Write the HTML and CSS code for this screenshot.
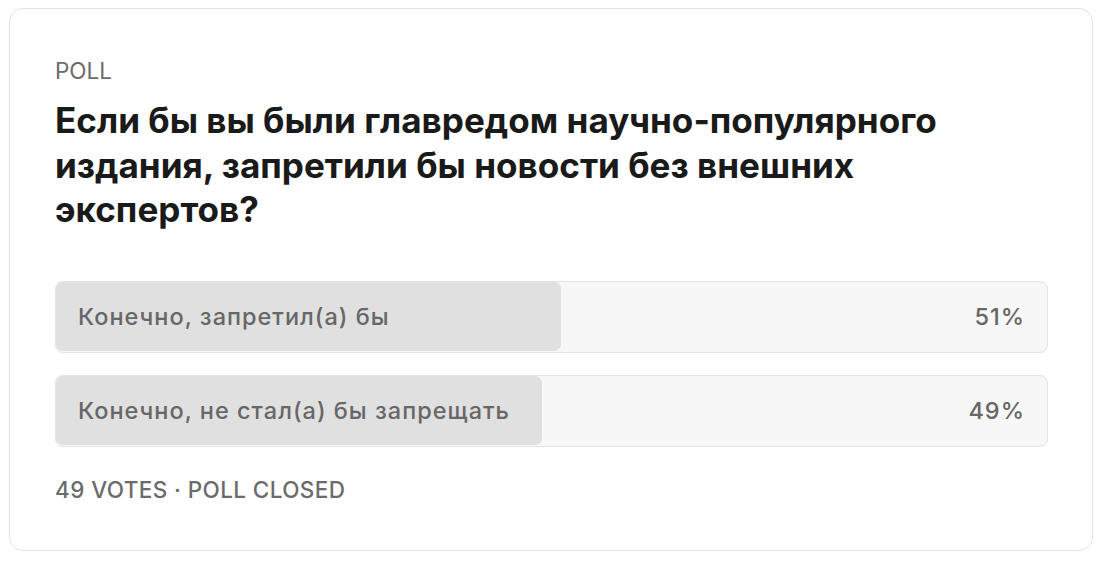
FILE: index.html
```html
<!DOCTYPE html>
<html lang="ru">
<head>
<meta charset="utf-8">
<link rel="stylesheet" href="styles.css">
</head>
<body>
<div class="card">
  <div class="label">POLL</div>
  <h2 class="question">Если бы вы были главредом научно-популярного издания, запретили бы новости без внешних экспертов?</h2>
  <div class="options">
    <div class="option">
      <div class="fill" style="width:51%"></div>
      <span class="text">Конечно, запретил(а) бы</span>
      <span class="pct">51%</span>
    </div>
    <div class="option">
      <div class="fill" style="width:49%"></div>
      <span class="text">Конечно, не стал(а) бы запрещать</span>
      <span class="pct">49%</span>
    </div>
  </div>
  <div class="footer">49 VOTES · POLL CLOSED</div>
</div>
</body>
</html>
```
FILE: styles.css
```css
* { box-sizing: border-box; }
body {
  margin: 8px 9px;
  background: #fff;
  font-family: Inter, "Noto Sans", sans-serif;
}
.card {
  border: 1px solid #e2e2e2;
  border-radius: 14px;
  padding: 48px 44px 0 45px;
  height: 543px;
}
.label {
  font-size: 22.5px;
  line-height: 28px;
  color: #6b6b6b;
  font-weight: 400;
}
.question {
  margin: 13px 0 0;
  max-width: 960px;
  font-size: 35.1px;
  line-height: 44.5px;
  font-weight: 700;
  color: #1a1a1a;
}
.options {
  margin-top: 49px;
  display: flex;
  flex-direction: column;
  gap: 22px;
}
.option {
  position: relative;
  height: 72px;
  border: 1px solid #e3e3e3;
  border-radius: 8px;
  background: #f7f7f7;
  display: flex;
  align-items: center;
  justify-content: space-between;
  padding: 0 23px 0 22px;
}
.fill {
  position: absolute;
  left: 0;
  top: 0;
  bottom: 1px;
  background: #e0e0e0;
  border-radius: 7px;
}
.text, .pct {
  position: relative;
  font-size: 23.5px;
  color: #676767;
  font-weight: 500;
  letter-spacing: 1px;
}
.pct {
  margin-right: -1px;
}
.footer {
  margin-top: 29px;
  font-size: 22.5px;
  line-height: 28px;
  color: #6b6b6b;
  font-weight: 500;
  letter-spacing: 0.4px;
}
```
